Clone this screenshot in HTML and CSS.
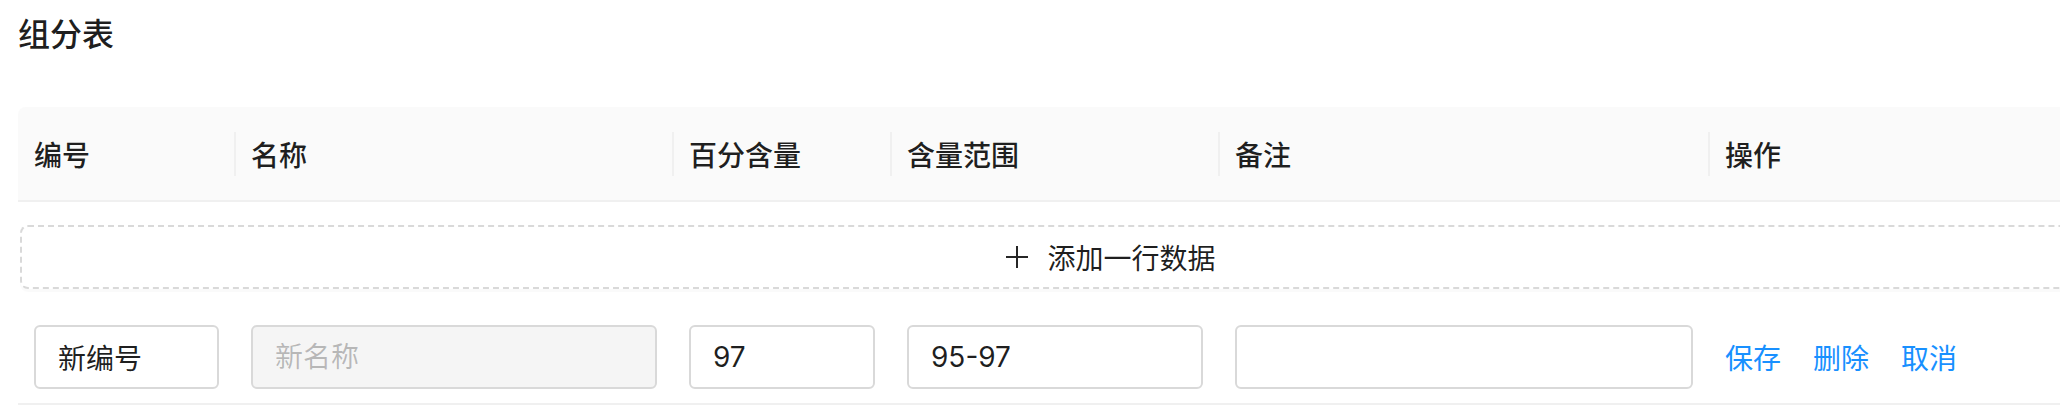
FILE: index.html
```html
<!DOCTYPE html>
<html lang="zh-CN">
<head>
<meta charset="utf-8">
<title>组分表</title>
<link rel="stylesheet" href="styles.css">
</head>
<body>
<div class="page">
  <div class="title">组分表</div>
  <div class="table-wrap">
    <div class="table">
      <div class="thead grid">
        <div class="th">编号</div>
        <div class="th">名称</div>
        <div class="th">百分含量</div>
        <div class="th">含量范围</div>
        <div class="th">备注</div>
        <div class="th">操作</div>
      </div>
      <div class="add-btn">
        <svg class="plus" width="22" height="22" viewBox="0 0 22 22"><path d="M11 0V22M0 11H22" stroke="#262626" stroke-width="2" fill="none"/></svg>
        <span>添加一行数据</span>
      </div>
      <div class="tr grid">
        <div class="td"><input class="input" value="新编号"></div>
        <div class="td"><input class="input" disabled placeholder="新名称"></div>
        <div class="td"><input class="input" value="97"></div>
        <div class="td"><input class="input" value="95-97"></div>
        <div class="td"><input class="input" value=""></div>
        <div class="td actions"><a class="link">保存</a><a class="link">删除</a><a class="link">取消</a></div>
      </div>
    </div>
  </div>
</div>
</body>
</html>
```

FILE: styles.css
```css
html, body {
  margin: 0;
  padding: 0;
  background: #ffffff;
}
body {
  font-family: Inter, "Noto Sans CJK SC", sans-serif;
  color: rgba(0, 0, 0, 0.88);
  overflow: hidden;
}
.page {
  padding: 11px 0 0 18px;
}
.title {
  font-size: 32px;
  line-height: 48px;
  font-weight: 500;
  color: rgba(0, 0, 0, 0.88);
}
.table-wrap {
  margin-top: 48px;
  overflow: hidden;
}
.table {
  width: 2184px;
}
.grid {
  display: grid;
  grid-template-columns: 217px 438px 218px 328px 490px 493px;
}
.thead {
  height: 95px;
  box-sizing: border-box;
  background: #fafafa;
  border-bottom: 2px solid #f0f0f0;
  border-top-left-radius: 8px;
}
.th {
  position: relative;
  display: flex;
  align-items: center;
  padding: 0 16px;
  font-size: 28px;
  font-weight: 500;
  color: rgba(0, 0, 0, 0.88);
}
.th + .th::before {
  content: "";
  position: absolute;
  left: -1px;
  top: 50%;
  width: 2px;
  height: 44px;
  margin-top: -22px;
  background: #f0f0f0;
}
.add-btn {
  margin: 23px 0 0 2px;
  width: 2182px;
  height: 64px;
  box-sizing: border-box;
  border: 2px dashed #d9d9d9;
  border-radius: 8px;
  box-shadow: 0 3px 0 rgba(0, 0, 0, 0.02);
  display: flex;
  align-items: center;
  justify-content: center;
  gap: 19px;
  font-size: 28px;
  color: rgba(0, 0, 0, 0.88);
}
.plus {
  display: block;
}
.tr {
  padding: 36px 0 14px;
  border-bottom: 2px solid #f0f0f0;
}
.td {
  display: flex;
  align-items: center;
  padding: 0 16px;
  min-width: 0;
}
.input {
  width: 100%;
  height: 64px;
  box-sizing: border-box;
  margin: 0;
  border: 2px solid #d9d9d9;
  border-radius: 6px;
  padding: 0 22px;
  font: inherit;
  font-size: 28px;
  color: rgba(0, 0, 0, 0.88);
  background: #ffffff;
  outline: none;
}
.input:disabled {
  background: #f5f5f5;
}
.input::placeholder {
  color: rgba(0, 0, 0, 0.25);
}
.actions {
  gap: 32px;
}
.link {
  font-size: 28px;
  color: #1890ff;
  text-decoration: none;
  cursor: pointer;
}
```
